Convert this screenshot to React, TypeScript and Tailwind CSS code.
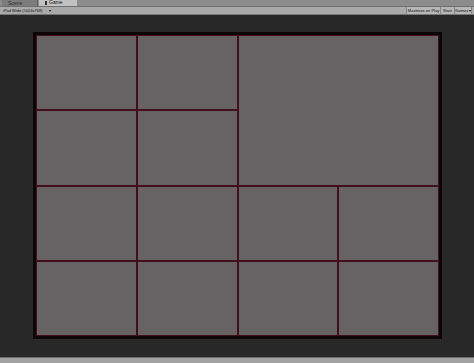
import React from "react";

const Cell = ({ className = "" }: { className?: string }) => (
  <div className={"bg-[#676364] " + className} />
);

export default function App() {
  return (
    <div
      className="w-[474px] h-[363px] bg-[#282828] flex flex-col overflow-hidden"
      style={{ fontFamily: '"Liberation Sans", Arial, sans-serif' }}
    >
      {/* Tab row */}
      <div className="h-[7px] bg-[#8c8c8c] flex items-end pl-[2px] gap-[1px] border-b border-[#6f6f6f]">
        <div className="h-[6px] w-[36px] bg-[#7c7c7c] text-[5px] leading-[6px] text-[#2a2a2a] pl-[6px] border-r border-[#5e5e5e]">
          Scene
        </div>
        <div className="h-[7px] w-[38px] bg-[#c2c2c2] text-[5px] leading-[7px] text-[#111] pl-[6px] flex items-center gap-[2px]">
          <span className="inline-block w-[2px] h-[4px] bg-[#333]" />
          Game
        </div>
      </div>
      {/* Toolbar */}
      <div className="h-[8px] bg-[#a9a9a9] border-b border-[#777] flex items-center text-[4px] leading-[6px] text-[#111] whitespace-nowrap">
        <div className="ml-[3px] w-[50px] h-[6px] flex items-center justify-between pr-[2px]">
          <span>iPad Wide (1024x768)</span>
          <span className="text-[4px]">▾</span>
        </div>
        <div className="flex-1" />
        <div className="flex h-[7px] mr-[2px]">
          <div className="w-[35px] bg-[#b6b6b6] border-x border-[#888] flex items-center justify-center">Maximize on Play</div>
          <div className="w-[14px] bg-[#b6b6b6] border-r border-[#888] flex items-center justify-center">Stats</div>
          <div className="w-[17px] bg-[#b6b6b6] border-r border-[#888] flex items-center justify-center">Gizmos ▾</div>
        </div>
      </div>
      {/* Game area */}
      <div className="flex-1 pt-[17px] pl-[33px]">
        <div className="w-[409px] h-[307px] border-[3px] border-[#0c0606] bg-[#42101a] p-[1px]">
          <div className="w-full h-full grid grid-cols-4 grid-rows-4 gap-[2px] bg-[#42101a]">
            <Cell />
            <Cell />
            <Cell className="col-span-2 row-span-2" />
            <Cell />
            <Cell />
            <Cell />
            <Cell />
            <Cell />
            <Cell />
            <Cell />
            <Cell />
            <Cell />
            <Cell />
          </div>
        </div>
      </div>
      <div className="h-[6px] bg-[#a3a3a3] border-t border-[#6a6a6a]" />
    </div>
  );
}
